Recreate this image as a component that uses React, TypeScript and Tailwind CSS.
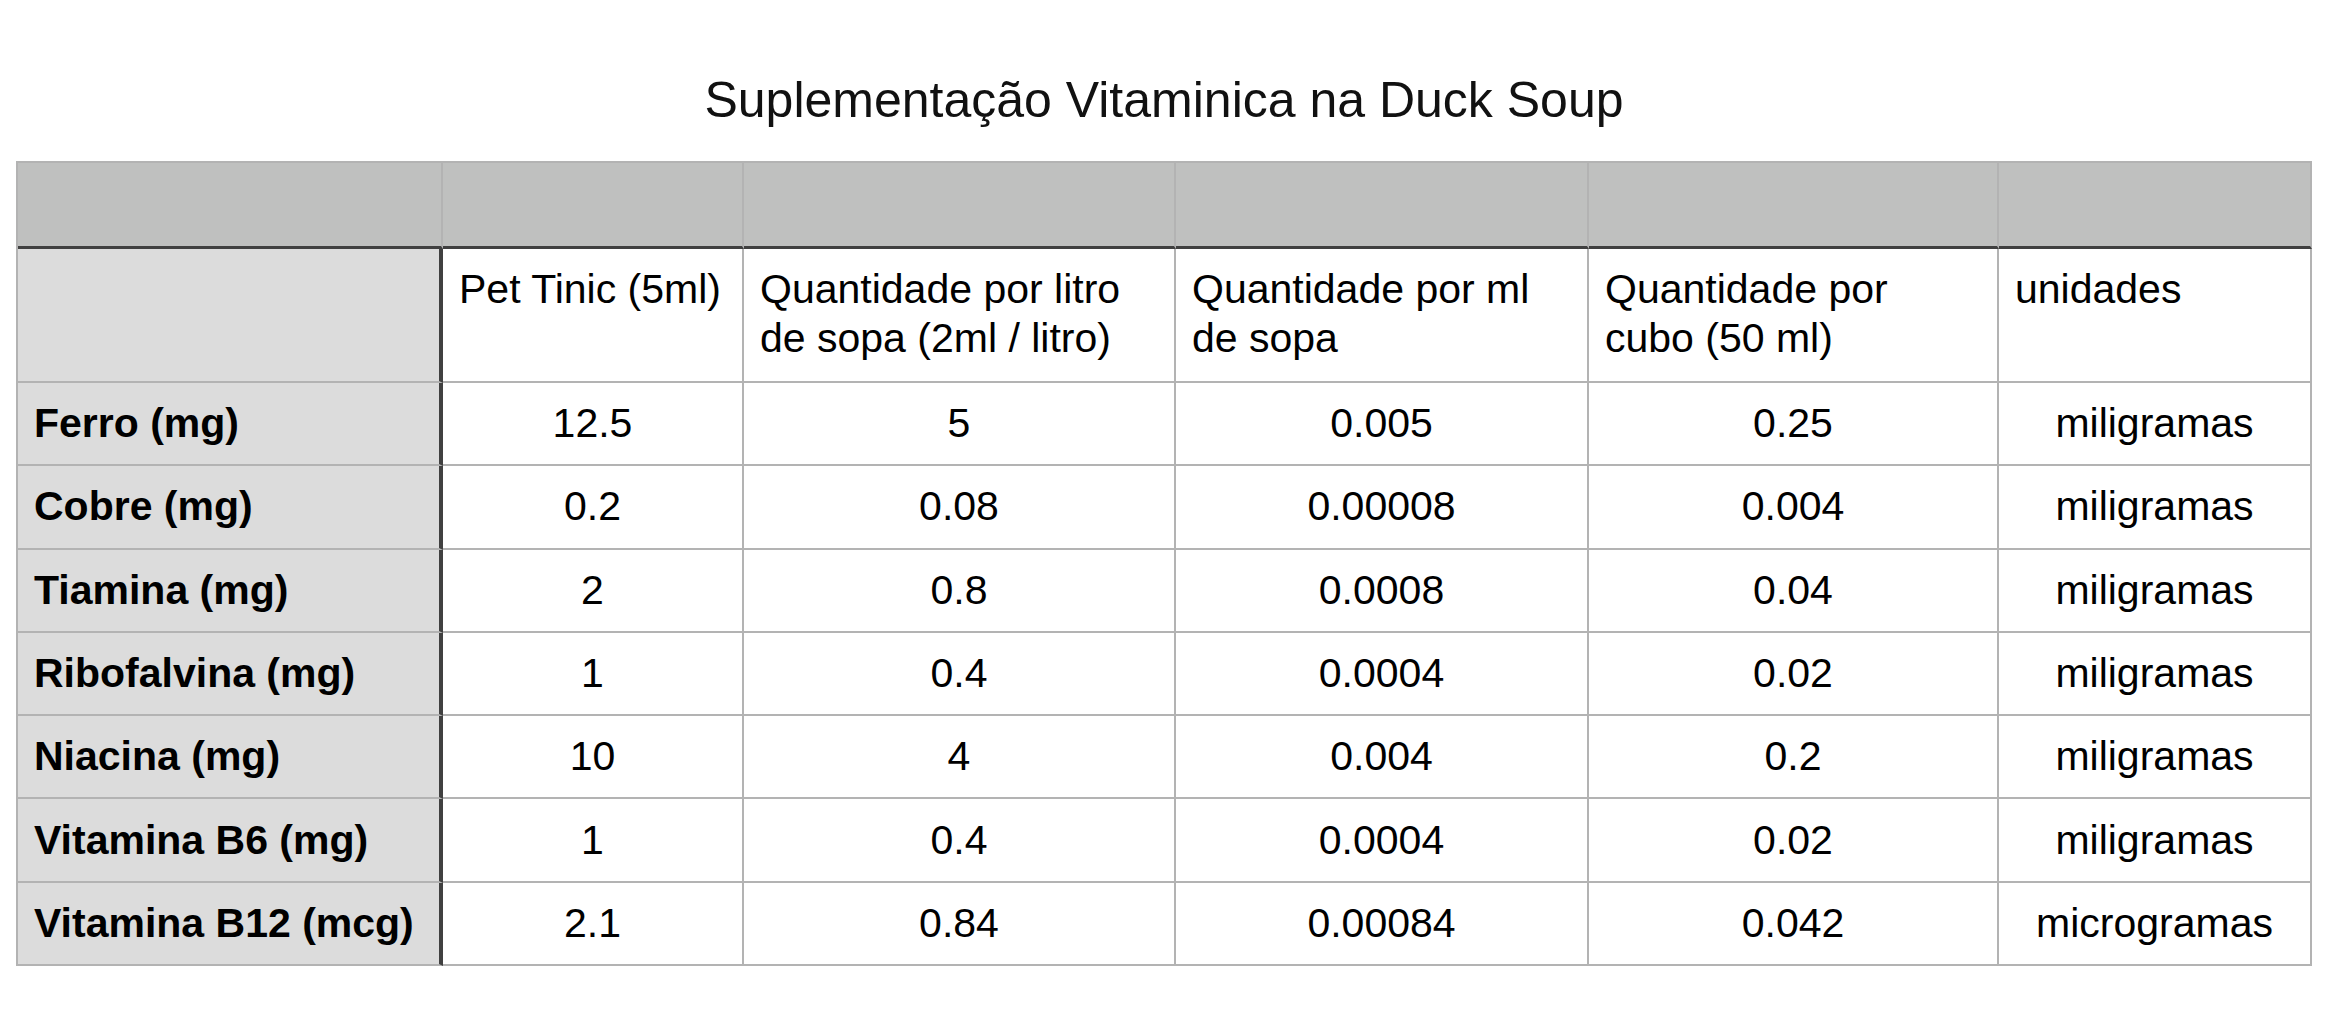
const columns = [
  "Pet Tinic (5ml)",
  "Quantidade por litro de sopa (2ml / litro)",
  "Quantidade por ml de sopa",
  "Quantidade por cubo (50 ml)",
  "unidades",
];

const rows: [string, string, string, string, string, string][] = [
  ["Ferro (mg)", "12.5", "5", "0.005", "0.25", "miligramas"],
  ["Cobre (mg)", "0.2", "0.08", "0.00008", "0.004", "miligramas"],
  ["Tiamina (mg)", "2", "0.8", "0.0008", "0.04", "miligramas"],
  ["Ribofalvina (mg)", "1", "0.4", "0.0004", "0.02", "miligramas"],
  ["Niacina (mg)", "10", "4", "0.004", "0.2", "miligramas"],
  ["Vitamina B6 (mg)", "1", "0.4", "0.0004", "0.02", "miligramas"],
  ["Vitamina B12 (mcg)", "2.1", "0.84", "0.00084", "0.042", "microgramas"],
];

const cell = "border-r-2 border-b-2 border-[#b3b3b3]";

export default function App() {
  return (
    <div className="min-h-screen bg-white px-[16px] text-black [font-family:'Liberation_Sans',Arial,sans-serif]">
      <div className="w-[2296px]">
        <h1 className="pt-[75px] text-center text-[50px] leading-[50px] font-normal text-[#111]">
          Suplementação Vitaminica na Duck Soup
        </h1>

        <div className="mt-[36px] grid grid-cols-[425px_301px_432px_413px_410px_313px] grid-rows-[86px_134px_repeat(7,83.3px)] border-t-2 border-l-2 border-[#b3b3b3] text-[41px] leading-[49px]">
          {/* faixa cinzenta do topo */}
          {Array.from({ length: 6 }).map((_, index) => (
            <div key={`top-${index}`} className="border-r-2 border-b-[3px] border-r-[#b3b3b3] border-b-[#404040] bg-[#bfc0bf]" />
          ))}

          {/* cabeçalho */}
          <div className={`${cell} border-r-[4px] border-r-[#404040] bg-[#dcdcdc]`} />
          {columns.map((title) => (
            <div key={title} className={`${cell} px-[16px] pt-[16px]`}>
              {title}
            </div>
          ))}

          {rows.map((row) => (
            <div key={row[0]} className="contents">
              <div className={`${cell} flex items-center border-r-[4px] border-r-[#404040] bg-[#dcdcdc] pl-[16px] font-bold`}>
                {row[0]}
              </div>
              {row.slice(1).map((value, index) => (
                <div key={index} className={`${cell} flex items-center justify-center`}>
                  {value}
                </div>
              ))}
            </div>
          ))}
        </div>
      </div>
    </div>
  );
}
